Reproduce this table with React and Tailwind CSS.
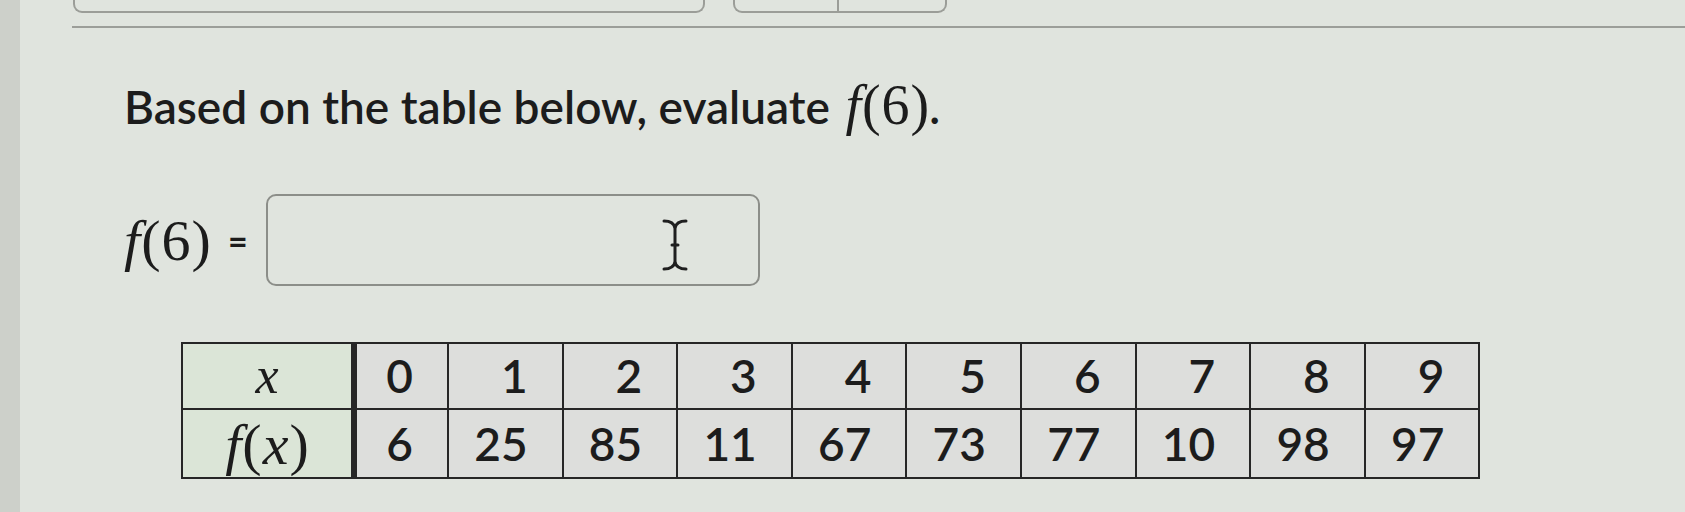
import React from "react";

const xs = [0, 1, 2, 3, 4, 5, 6, 7, 8, 9];
const fx = [6, 25, 85, 11, 67, 73, 77, 10, 98, 97];

function Cursor() {
  return (
    <svg width="26" height="54" viewBox="0 0 26 54" fill="none" stroke="#1f1f1f" strokeWidth="3" strokeLinecap="round">
      <path d="M2 3 C 8 3, 12 5, 13 10 C 14 5, 18 3, 24 3" />
      <path d="M13 10 L13 44" />
      <path d="M2 51 C 8 51, 12 49, 13 44 C 14 49, 18 51, 24 51" />
      <path d="M10 27 L16 27" />
    </svg>
  );
}

function MathF({ arg, className = "" }) {
  return (
    <span className={`font-['Liberation_Serif',serif] ${className}`}>
      <span className="italic">f</span>
      <span className="mx-[1px]">(</span>
      {arg}
      <span className="ml-[1px]">)</span>
    </span>
  );
}

export default function App() {
  return (
    <div className="w-[1685px] h-[512px] bg-[#e0e4de] flex overflow-hidden font-['Lato',sans-serif] text-[#1c1c1c]">
      <div className="w-[20px] shrink-0 bg-[#cdd0ca]" />
      <div className="flex-1 flex flex-col">
        <div className="flex h-[13px] pl-[53px] gap-[28px]">
          <div className="w-[632px] h-full border-2 border-t-0 border-[#9b9d98] rounded-b-[9px]" />
          <div className="w-[214px] h-full border-2 border-t-0 border-[#9b9d98] rounded-b-[9px] flex">
            <div className="w-[104px] border-r-2 border-[#9b9d98]" />
          </div>
        </div>
        <div className="mt-[13px] ml-[52px] h-[2px] bg-[#9c9e99]" />

        <div className="pl-[104px] flex flex-col">
          <p className="mt-[50px] text-[46px] leading-[54px] font-semibold whitespace-nowrap">
            Based on the table below, evaluate{" "}
            <MathF arg="6" className="ml-[4px] text-[56px] font-normal" />.
          </p>

          <div className="mt-[60px] flex items-center h-[92px]">
            <div className="w-[104px] shrink-0">
              <MathF arg="6" className="text-[58px]" />
            </div>
            <span className="text-[34px] font-bold">=</span>
            <div className="relative ml-[18px] w-[494px] h-[92px] border-2 border-[#8c8e89] rounded-[10px]">
              <div className="absolute left-[394px] top-[22px]">
                <Cursor />
              </div>
            </div>
          </div>

          <table className="mt-[56px] ml-[57px] border-collapse table-fixed w-[1298px] text-[46px] font-semibold">
            <colgroup>
              <col className="w-[172px]" />
              <col className="w-[94px]" />
              {xs.slice(1).map((x) => (
                <col key={x} className="w-[114.6px]" />
              ))}
            </colgroup>
            <tbody>
              <tr className="h-[66px]">
                <td className="border-2 border-[#262626] border-r-[6px] bg-[#dbe5d7] text-center font-['Liberation_Serif',serif] italic font-normal text-[52px] leading-none">
                  x
                </td>
                {xs.map((x) => (
                  <td key={x} className="border-2 border-[#262626] bg-[#dddedc] text-right pr-[34px] leading-none">
                    {x}
                  </td>
                ))}
              </tr>
              <tr className="h-[69px]">
                <td className="border-2 border-[#262626] border-r-[6px] bg-[#dbe5d7] text-center font-normal text-[58px] leading-none">
                  <span className="font-['Liberation_Serif',serif]">
                    <span className="italic">f</span>
                    <span className="mx-[1px]">(</span>
                    <span className="italic">x</span>
                    <span className="ml-[1px]">)</span>
                  </span>
                </td>
                {fx.map((v, i) => (
                  <td key={i} className="border-2 border-[#262626] bg-[#dddedc] text-right pr-[34px] leading-none">
                    {v}
                  </td>
                ))}
              </tr>
            </tbody>
          </table>
        </div>
      </div>
    </div>
  );
}
